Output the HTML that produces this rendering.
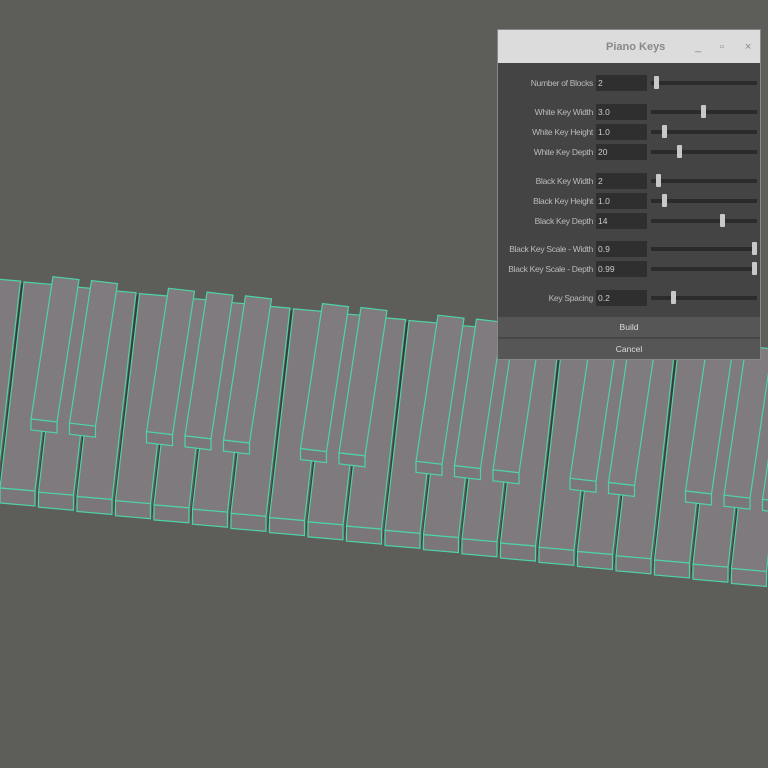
<!DOCTYPE html><html><head><style>
body{margin:0;width:768px;height:768px;overflow:hidden;background:#5d5e5a;font-family:"Liberation Sans",sans-serif;position:relative}
svg{position:absolute;left:0;top:0}
.dlg{position:absolute;left:497px;top:29px;width:264px;height:331px;background:#444;border:1px solid #888;box-sizing:border-box}
.tb{height:33px;background:#dcdcdc;position:relative;color:#888;font-size:11px}
.tb .t{position:absolute;left:108px;top:11px;font-weight:bold}
.tb span{position:absolute;top:11px}
.row{position:absolute;left:0;width:264px;height:16px;font-size:8.5px;color:#bbb}
.row .l{position:absolute;right:169px;top:3px;white-space:nowrap;letter-spacing:-.3px}
.row .i{position:absolute;left:98px;top:0;width:51px;height:16px;background:#2f2f2f;color:#ccc;box-sizing:border-box;padding:3px 2px}
.row .tr{position:absolute;left:153px;top:6px;width:106px;height:4px;background:#2b2b2b}
.row .h{position:absolute;top:1px;width:5px;height:13px;background:#c8c8c8;border-radius:1px}
.btn{position:absolute;left:0;width:262px;height:20px;background:#565656;color:#ddd;font-size:8.5px;text-align:center;line-height:20px}
</style></head><body>
<svg id="s" width="768" height="768"></svg>
<div class="dlg">
<div class="tb"><span class="t">Piano Keys</span><span style="left:197px">_</span><span style="left:222px">▫</span><span style="left:247px">×</span></div>
<div class="row" style="top:45px"><span class="l">Number of Blocks</span><span class="i">2</span><span class="tr"></span><span class="h" style="left:156px"></span></div>
<div class="row" style="top:74px"><span class="l">White Key Width</span><span class="i">3.0</span><span class="tr"></span><span class="h" style="left:203px"></span></div>
<div class="row" style="top:94px"><span class="l">White Key Height</span><span class="i">1.0</span><span class="tr"></span><span class="h" style="left:164px"></span></div>
<div class="row" style="top:114px"><span class="l">White Key Depth</span><span class="i">20</span><span class="tr"></span><span class="h" style="left:179px"></span></div>
<div class="row" style="top:143px"><span class="l">Black Key Width</span><span class="i">2</span><span class="tr"></span><span class="h" style="left:158px"></span></div>
<div class="row" style="top:163px"><span class="l">Black Key Height</span><span class="i">1.0</span><span class="tr"></span><span class="h" style="left:164px"></span></div>
<div class="row" style="top:183px"><span class="l">Black Key Depth</span><span class="i">14</span><span class="tr"></span><span class="h" style="left:222px"></span></div>
<div class="row" style="top:211px"><span class="l">Black Key Scale - Width</span><span class="i">0.9</span><span class="tr"></span><span class="h" style="left:254px"></span></div>
<div class="row" style="top:231px"><span class="l">Black Key Scale - Depth</span><span class="i">0.99</span><span class="tr"></span><span class="h" style="left:254px"></span></div>
<div class="row" style="top:260px"><span class="l">Key Spacing</span><span class="i">0.2</span><span class="tr"></span><span class="h" style="left:173px"></span></div>
<div class="btn" style="top:287px">Build</div>
<div class="btn" style="top:308px;border-top:1px solid #4a4a4a">Cancel</div>
</div>
<script>
var s=document.getElementById('s'),h='';
function yt(x){return 282+x*0.1}function yb(x){return 488+x*0.11}
function poly(p,f){h+='<polygon points="'+p.map(function(a){return a[0].toFixed(1)+','+a[1].toFixed(1)}).join(' ')+'" fill="'+f+'" stroke="#4fd3a6" stroke-width="1.2"/>'}
for(var i=-1;i<21;i++){var x=i*38.5,w=35,sl=24;
var t=yt(x),b=yb(x);
h+='<polygon points="'+(x-3)+','+(b+16)+' '+(x+sl-3)+','+(t+2)+' '+(x+sl)+','+t+' '+x+','+b+'" fill="#3a3a38"/>';
poly([[x+sl,t],[x+sl+w,t+3],[x+w,b+3],[x,b]],'#7e7a7d');
poly([[x,b],[x+w,b+3],[x+w,b+18],[x,b+15]],'#7a7679');}
var pat=[1,1,0,1,1,1,0];
for(var i=-1;i<21;i++){if(!pat[(i+7)%7])continue;var x=i*38.5+27,w=26,sl=26;
var t=yt(x)-8,b=yb(x)-72;
poly([[x+sl,t],[x+sl+w,t+3],[x+w+4,b+3],[x+4,b]],'#7f7b7e');
poly([[x+4,b],[x+w+4,b+3],[x+w+4,b+14],[x+4,b+11]],'#7a7679');}
s.innerHTML=h;
</script>
</body></html>
